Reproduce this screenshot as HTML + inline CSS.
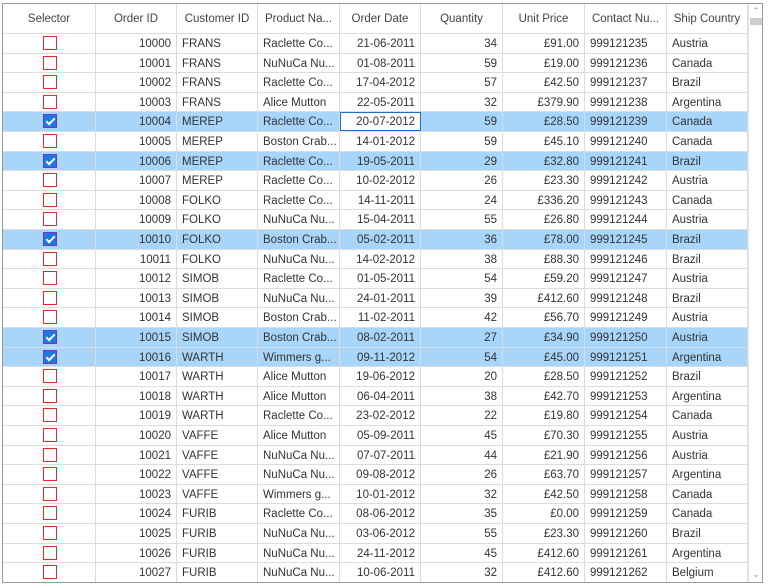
<!DOCTYPE html>
<html><head><meta charset="utf-8"><style>
*{margin:0;padding:0;box-sizing:border-box}
body{width:768px;height:587px;background:#fff;font-family:"Liberation Sans",sans-serif;font-size:11.5px;color:#333;position:relative;overflow:hidden}
.frame{position:absolute;left:2px;top:3px;width:761px;height:580px;border:1px solid #9a9a9a;overflow:hidden}
.hdr{position:absolute;left:0;top:0;height:30px;width:745px;border-bottom:1px solid #ddd;background:#fff}
.c{position:absolute;top:0;height:100%;border-right:1px solid #dcdcdc;white-space:nowrap;overflow:hidden;line-height:19px;padding:0 5px}
.hdr .c{line-height:31px;text-align:center;color:#444}
.r{position:absolute;left:0;width:745px;height:19.6px;border-bottom:1px solid #dcdcdc}
.s{background:#a8d5fa}
.r .c{line-height:20px}
.rt{text-align:right}
.cb{position:absolute;left:40px;top:2px;width:14px;height:14px;border:1px solid #e8262b;background:#fff}
.ck{background:#1a78e0;border-color:#7b32c8}
.ck:after{content:"";position:absolute;left:4px;top:1px;width:3px;height:7px;border:solid #fff;border-width:0 2px 2px 0;transform:rotate(45deg)}
.w0{left:0;width:93px}.w1{left:93px;width:81px}.w2{left:174px;width:81px}.w3{left:255px;width:82px}.w4{left:337px;width:81px}.w5{left:418px;width:82px}.w6{left:500px;width:82px}.w7{left:582px;width:82px}.w8{left:664px;width:81px}
.sb{position:absolute;left:745px;top:0;width:15px;height:100%;background:#fff;border-left:1px solid #e6e6e6}
.th{position:absolute;left:1px;top:14px;width:13px;height:7px;background:#cdcdcd}
.focus{outline:1px solid #1a6fd0;outline-offset:-1px;background:#fff}
</style></head><body><div class="frame">
<div class="hdr"><div class="c w0">Selector</div><div class="c w1">Order ID</div><div class="c w2">Customer ID</div><div class="c w3">Product Na...</div><div class="c w4">Order Date</div><div class="c w5">Quantity</div><div class="c w6">Unit Price</div><div class="c w7">Contact Nu...</div><div class="c w8">Ship Country</div></div>

<div class="r" style="top:30px"><div class="c w0"><div class="cb"></div></div><div class="c w1 rt">10000</div><div class="c w2">FRANS</div><div class="c w3">Raclette Co...</div><div class="c w4 rt">21-06-2011</div><div class="c w5 rt">34</div><div class="c w6 rt">£91.00</div><div class="c w7">999121235</div><div class="c w8">Austria</div></div>
<div class="r" style="top:49.6px"><div class="c w0"><div class="cb"></div></div><div class="c w1 rt">10001</div><div class="c w2">FRANS</div><div class="c w3">NuNuCa Nu...</div><div class="c w4 rt">01-08-2011</div><div class="c w5 rt">59</div><div class="c w6 rt">£19.00</div><div class="c w7">999121236</div><div class="c w8">Canada</div></div>
<div class="r" style="top:69.2px"><div class="c w0"><div class="cb"></div></div><div class="c w1 rt">10002</div><div class="c w2">FRANS</div><div class="c w3">Raclette Co...</div><div class="c w4 rt">17-04-2012</div><div class="c w5 rt">57</div><div class="c w6 rt">£42.50</div><div class="c w7">999121237</div><div class="c w8">Brazil</div></div>
<div class="r" style="top:88.8px"><div class="c w0"><div class="cb"></div></div><div class="c w1 rt">10003</div><div class="c w2">FRANS</div><div class="c w3">Alice Mutton</div><div class="c w4 rt">22-05-2011</div><div class="c w5 rt">32</div><div class="c w6 rt">£379.90</div><div class="c w7">999121238</div><div class="c w8">Argentina</div></div>
<div class="r s" style="top:108.4px"><div class="c w0"><div class="cb ck"></div></div><div class="c w1 rt">10004</div><div class="c w2">MEREP</div><div class="c w3">Raclette Co...</div><div class="c w4 rt focus">20-07-2012</div><div class="c w5 rt">59</div><div class="c w6 rt">£28.50</div><div class="c w7">999121239</div><div class="c w8">Canada</div></div>
<div class="r" style="top:128px"><div class="c w0"><div class="cb"></div></div><div class="c w1 rt">10005</div><div class="c w2">MEREP</div><div class="c w3">Boston Crab...</div><div class="c w4 rt">14-01-2012</div><div class="c w5 rt">59</div><div class="c w6 rt">£45.10</div><div class="c w7">999121240</div><div class="c w8">Canada</div></div>
<div class="r s" style="top:147.6px"><div class="c w0"><div class="cb ck"></div></div><div class="c w1 rt">10006</div><div class="c w2">MEREP</div><div class="c w3">Raclette Co...</div><div class="c w4 rt">19-05-2011</div><div class="c w5 rt">29</div><div class="c w6 rt">£32.80</div><div class="c w7">999121241</div><div class="c w8">Brazil</div></div>
<div class="r" style="top:167.2px"><div class="c w0"><div class="cb"></div></div><div class="c w1 rt">10007</div><div class="c w2">MEREP</div><div class="c w3">Raclette Co...</div><div class="c w4 rt">10-02-2012</div><div class="c w5 rt">26</div><div class="c w6 rt">£23.30</div><div class="c w7">999121242</div><div class="c w8">Austria</div></div>
<div class="r" style="top:186.8px"><div class="c w0"><div class="cb"></div></div><div class="c w1 rt">10008</div><div class="c w2">FOLKO</div><div class="c w3">Raclette Co...</div><div class="c w4 rt">14-11-2011</div><div class="c w5 rt">24</div><div class="c w6 rt">£336.20</div><div class="c w7">999121243</div><div class="c w8">Canada</div></div>
<div class="r" style="top:206.4px"><div class="c w0"><div class="cb"></div></div><div class="c w1 rt">10009</div><div class="c w2">FOLKO</div><div class="c w3">NuNuCa Nu...</div><div class="c w4 rt">15-04-2011</div><div class="c w5 rt">55</div><div class="c w6 rt">£26.80</div><div class="c w7">999121244</div><div class="c w8">Austria</div></div>
<div class="r s" style="top:226px"><div class="c w0"><div class="cb ck"></div></div><div class="c w1 rt">10010</div><div class="c w2">FOLKO</div><div class="c w3">Boston Crab...</div><div class="c w4 rt">05-02-2011</div><div class="c w5 rt">36</div><div class="c w6 rt">£78.00</div><div class="c w7">999121245</div><div class="c w8">Brazil</div></div>
<div class="r" style="top:245.6px"><div class="c w0"><div class="cb"></div></div><div class="c w1 rt">10011</div><div class="c w2">FOLKO</div><div class="c w3">NuNuCa Nu...</div><div class="c w4 rt">14-02-2012</div><div class="c w5 rt">38</div><div class="c w6 rt">£88.30</div><div class="c w7">999121246</div><div class="c w8">Brazil</div></div>
<div class="r" style="top:265.2px"><div class="c w0"><div class="cb"></div></div><div class="c w1 rt">10012</div><div class="c w2">SIMOB</div><div class="c w3">Raclette Co...</div><div class="c w4 rt">01-05-2011</div><div class="c w5 rt">54</div><div class="c w6 rt">£59.20</div><div class="c w7">999121247</div><div class="c w8">Austria</div></div>
<div class="r" style="top:284.8px"><div class="c w0"><div class="cb"></div></div><div class="c w1 rt">10013</div><div class="c w2">SIMOB</div><div class="c w3">NuNuCa Nu...</div><div class="c w4 rt">24-01-2011</div><div class="c w5 rt">39</div><div class="c w6 rt">£412.60</div><div class="c w7">999121248</div><div class="c w8">Brazil</div></div>
<div class="r" style="top:304.4px"><div class="c w0"><div class="cb"></div></div><div class="c w1 rt">10014</div><div class="c w2">SIMOB</div><div class="c w3">Boston Crab...</div><div class="c w4 rt">11-02-2011</div><div class="c w5 rt">42</div><div class="c w6 rt">£56.70</div><div class="c w7">999121249</div><div class="c w8">Austria</div></div>
<div class="r s" style="top:324px"><div class="c w0"><div class="cb ck"></div></div><div class="c w1 rt">10015</div><div class="c w2">SIMOB</div><div class="c w3">Boston Crab...</div><div class="c w4 rt">08-02-2011</div><div class="c w5 rt">27</div><div class="c w6 rt">£34.90</div><div class="c w7">999121250</div><div class="c w8">Austria</div></div>
<div class="r s" style="top:343.6px"><div class="c w0"><div class="cb ck"></div></div><div class="c w1 rt">10016</div><div class="c w2">WARTH</div><div class="c w3">Wimmers g...</div><div class="c w4 rt">09-11-2012</div><div class="c w5 rt">54</div><div class="c w6 rt">£45.00</div><div class="c w7">999121251</div><div class="c w8">Argentina</div></div>
<div class="r" style="top:363.2px"><div class="c w0"><div class="cb"></div></div><div class="c w1 rt">10017</div><div class="c w2">WARTH</div><div class="c w3">Alice Mutton</div><div class="c w4 rt">19-06-2012</div><div class="c w5 rt">20</div><div class="c w6 rt">£28.50</div><div class="c w7">999121252</div><div class="c w8">Brazil</div></div>
<div class="r" style="top:382.8px"><div class="c w0"><div class="cb"></div></div><div class="c w1 rt">10018</div><div class="c w2">WARTH</div><div class="c w3">Alice Mutton</div><div class="c w4 rt">06-04-2011</div><div class="c w5 rt">38</div><div class="c w6 rt">£42.70</div><div class="c w7">999121253</div><div class="c w8">Argentina</div></div>
<div class="r" style="top:402.4px"><div class="c w0"><div class="cb"></div></div><div class="c w1 rt">10019</div><div class="c w2">WARTH</div><div class="c w3">Raclette Co...</div><div class="c w4 rt">23-02-2012</div><div class="c w5 rt">22</div><div class="c w6 rt">£19.80</div><div class="c w7">999121254</div><div class="c w8">Canada</div></div>
<div class="r" style="top:422px"><div class="c w0"><div class="cb"></div></div><div class="c w1 rt">10020</div><div class="c w2">VAFFE</div><div class="c w3">Alice Mutton</div><div class="c w4 rt">05-09-2011</div><div class="c w5 rt">45</div><div class="c w6 rt">£70.30</div><div class="c w7">999121255</div><div class="c w8">Austria</div></div>
<div class="r" style="top:441.6px"><div class="c w0"><div class="cb"></div></div><div class="c w1 rt">10021</div><div class="c w2">VAFFE</div><div class="c w3">NuNuCa Nu...</div><div class="c w4 rt">07-07-2011</div><div class="c w5 rt">44</div><div class="c w6 rt">£21.90</div><div class="c w7">999121256</div><div class="c w8">Austria</div></div>
<div class="r" style="top:461.2px"><div class="c w0"><div class="cb"></div></div><div class="c w1 rt">10022</div><div class="c w2">VAFFE</div><div class="c w3">NuNuCa Nu...</div><div class="c w4 rt">09-08-2012</div><div class="c w5 rt">26</div><div class="c w6 rt">£63.70</div><div class="c w7">999121257</div><div class="c w8">Argentina</div></div>
<div class="r" style="top:480.8px"><div class="c w0"><div class="cb"></div></div><div class="c w1 rt">10023</div><div class="c w2">VAFFE</div><div class="c w3">Wimmers g...</div><div class="c w4 rt">10-01-2012</div><div class="c w5 rt">32</div><div class="c w6 rt">£42.50</div><div class="c w7">999121258</div><div class="c w8">Canada</div></div>
<div class="r" style="top:500.4px"><div class="c w0"><div class="cb"></div></div><div class="c w1 rt">10024</div><div class="c w2">FURIB</div><div class="c w3">Raclette Co...</div><div class="c w4 rt">08-06-2012</div><div class="c w5 rt">35</div><div class="c w6 rt">£0.00</div><div class="c w7">999121259</div><div class="c w8">Canada</div></div>
<div class="r" style="top:520px"><div class="c w0"><div class="cb"></div></div><div class="c w1 rt">10025</div><div class="c w2">FURIB</div><div class="c w3">NuNuCa Nu...</div><div class="c w4 rt">03-06-2012</div><div class="c w5 rt">55</div><div class="c w6 rt">£23.30</div><div class="c w7">999121260</div><div class="c w8">Brazil</div></div>
<div class="r" style="top:539.6px"><div class="c w0"><div class="cb"></div></div><div class="c w1 rt">10026</div><div class="c w2">FURIB</div><div class="c w3">NuNuCa Nu...</div><div class="c w4 rt">24-11-2012</div><div class="c w5 rt">45</div><div class="c w6 rt">£412.60</div><div class="c w7">999121261</div><div class="c w8">Argentina</div></div>
<div class="r" style="top:559.2px"><div class="c w0"><div class="cb"></div></div><div class="c w1 rt">10027</div><div class="c w2">FURIB</div><div class="c w3">NuNuCa Nu...</div><div class="c w4 rt">10-06-2011</div><div class="c w5 rt">32</div><div class="c w6 rt">£412.60</div><div class="c w7">999121262</div><div class="c w8">Belgium</div></div>

<div class="sb"><div style="position:absolute;left:3px;top:2px;font-size:9px;color:#999">&#8963;</div><div class="th"></div><div style="position:absolute;left:3px;bottom:2px;font-size:9px;color:#999">&#8964;</div></div>
</div></body></html>
